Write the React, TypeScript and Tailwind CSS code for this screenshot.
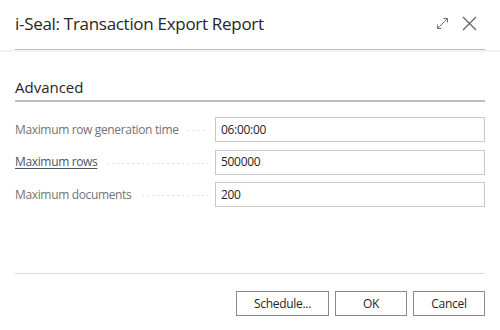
import React from "react";

const rows = [
  { label: "Maximum row generation time", value: "06:00:00", link: false },
  { label: "Maximum rows", value: "500000", link: true },
  { label: "Maximum documents", value: "200", link: false },
];

export default function App() {
  return (
    <div
      className="w-[500px] h-[330px] bg-white flex flex-col overflow-hidden"
      style={{ fontFamily: '"Open Sans", "Noto Sans", sans-serif' }}
    >
      <div className="relative h-[51px] shrink-0">
        <div className="mx-[15px] h-[51px] border-b-2 border-[#b7bdc6] flex items-center justify-between">
          <div className="text-[17px] text-[#262626] tracking-[-0.3px] pb-[1px]">
            i-Seal: Transaction Export Report
          </div>
          <div className="flex items-center gap-[14px] pr-[8px] pb-[2px]">
            <svg width="11" height="11" viewBox="0 0 11 11" fill="none" stroke="#707070" strokeWidth="1">
              <path d="M0.5 10.5 L10.5 0.5 M6.5 0.5 H10.5 V4.5 M0.5 6.5 V10.5 H4.5" />
            </svg>
            <svg width="15" height="15" viewBox="0 0 15 15" fill="none" stroke="#606060" strokeWidth="1.2">
              <path d="M1 1 L14 14 M14 1 L1 14" />
            </svg>
          </div>
        </div>
        <div className="absolute left-0 right-0 bottom-[-1px] h-[2px] bg-[#f2f2f2]" />
      </div>

      <div className="mx-[15px] mt-[26px] border-b-2 border-[#b7bdc6] h-[25px] flex items-end">
        <div className="text-[15px] text-[#262626] leading-[20px] pb-[3px]">Advanced</div>
      </div>

      <div className="mx-[15px] mt-[15px] flex flex-col gap-[7.5px]">
        {rows.map((r) => (
          <div key={r.label} className="flex items-center h-[25px]">
            <div className="w-[200px] flex items-center pr-[7px]">
              <span
                className={
                  "text-[12px] tracking-[-0.35px] whitespace-nowrap " +
                  (r.link ? "text-[#4a5566] underline underline-offset-2" : "text-[#737373]")
                }
              >
                {r.label}
              </span>
              <div className="flex-1 ml-[9px] mt-[2px] h-[1px] bg-[linear-gradient(to_right,#c4c4c4_1px,transparent_1px)] bg-[length:5px_1px] bg-repeat-x bg-right" />
            </div>
            <div className="flex-1 h-[25px] border border-[#c9c9c9] flex items-center px-[5px] text-[12px] tracking-[-0.3px] text-[#262626]">
              {r.value}
            </div>
          </div>
        ))}
      </div>

      <div className="flex-1" />

      <div className="mx-[15px] border-t border-[#dcdcdc]" />
      <div className="mx-[15px] mt-[17px] mb-[14px] flex justify-end gap-[6px]">
        <button className="w-[93px] h-[25px] border border-[#8a8a8a] text-[12px] tracking-[-0.3px] text-[#262626] bg-white">
          Schedule...
        </button>
        <button className="w-[72px] h-[25px] border border-[#8a8a8a] text-[12px] tracking-[-0.3px] text-[#262626] bg-white">
          OK
        </button>
        <button className="w-[72px] h-[25px] border border-[#8a8a8a] text-[12px] tracking-[-0.3px] text-[#262626] bg-white">
          Cancel
        </button>
      </div>
    </div>
  );
}
